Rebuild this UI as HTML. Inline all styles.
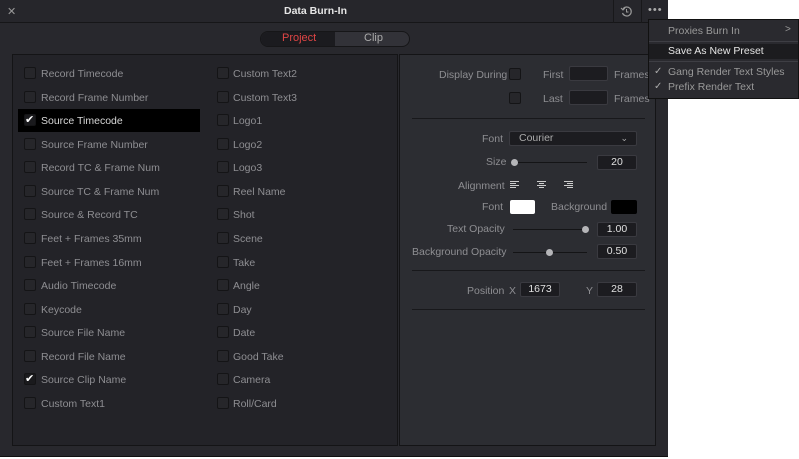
<!DOCTYPE html>
<html><head><meta charset="utf-8"><style>
*{margin:0;padding:0;box-sizing:border-box}
body{width:799px;height:459px;background:#fff;position:relative;overflow:hidden;font-family:"Liberation Sans",sans-serif;font-size:10px;color:#9a9a9c}
.a{position:absolute;white-space:nowrap}
#win{position:absolute;left:0;top:0;width:668px;height:457px;background:#28282d;border-bottom:1px solid #111}
#tb{position:absolute;left:0;top:0;width:668px;height:23px;background:#26262b;border-bottom:1px solid #161618}
.lp{position:absolute;left:12px;top:54px;width:386px;height:392px;background:#232328;border:1px solid #141416}
.rp{position:absolute;left:399px;top:54px;width:257px;height:392px;background:#2c2d32;border:1px solid #141416}
.cb{position:absolute;width:12px;height:12px;background:#26262a;border:1px solid #141416;border-radius:2px}
.lb{position:absolute;color:#8e8e92;font-size:10.5px;line-height:14px}
.in{position:absolute;height:15px;background:#1c1c20;border:1px solid #3a3a40;border-radius:2px;color:#e0e0e0;font-size:10.5px;text-align:center;line-height:13px}
.hr{position:absolute;left:412px;width:233px;height:1px;background:#18181b}
.sl{position:absolute;height:1px;background:#141416}
.dot{position:absolute;width:7px;height:7px;border-radius:50%;background:#b5b5b8}
</style></head><body>
<div id="win">
<div id="tb">
<div class="a" style="left:7px;top:5px;color:#999;font-size:11px">✕</div>
<div class="a" style="left:284px;top:5px;color:#e6e6e6;font-weight:bold;font-size:10.5px">Data Burn-In</div>
<div class="a" style="left:613px;top:0;width:1px;height:23px;background:#18181a"></div>
<div class="a" style="left:641px;top:0;width:1px;height:23px;background:#18181a"></div>
<svg class="a" style="left:620px;top:5px" width="13" height="13" viewBox="0 0 13 13"><path d="M3 4A4.5 4.5 0 1 1 2.5 8" fill="none" stroke="#999" stroke-width="1.2"/><path d="M1 3L3 5L5 3" fill="none" stroke="#999" stroke-width="1"/><path d="M6.5 4v3h2" fill="none" stroke="#999" stroke-width="1"/></svg>
<div class="a" style="left:648px;top:4px;color:#aaa;font-size:11px;letter-spacing:1px">•••</div>
</div>
<div class="a" style="left:260px;top:31px;width:150px;height:16px;border-radius:8px;background:#323238;border:1px solid #161618"></div>
<div class="a" style="left:261px;top:32px;width:74px;height:14px;border-radius:7px 0 0 7px;background:#1b1b1f"></div>
<div class="a" style="left:282px;top:32px;color:#e04545;font-size:11px">Project</div>
<div class="a" style="left:364px;top:32px;color:#aaa;font-size:11px">Clip</div>
<div class="lp"></div>
<div class="a" style="left:18px;top:109px;width:182px;height:23px;background:#000"></div>
<div class="rp"></div>
</div>
<div id="rows"></div>
<div class="lb" style="left:439px;top:68px">Display During</div>
<div class="cb" style="left:509px;top:68px"></div>
<div class="lb" style="left:543px;top:68px">First</div>
<div class="in" style="left:569px;top:66px;width:39px"></div>
<div class="lb" style="left:614px;top:68px">Frames</div>
<div class="cb" style="left:509px;top:92px"></div>
<div class="lb" style="left:543px;top:92px">Last</div>
<div class="in" style="left:569px;top:90px;width:39px"></div>
<div class="lb" style="left:614px;top:92px">Frames</div>
<div class="hr" style="top:118px"></div>
<div class="lb" style="left:482px;top:132px">Font</div>
<div class="in" style="left:509px;top:131px;width:128px;text-align:left;padding-left:9px;color:#aaa">Courier<span style="position:absolute;right:8px;top:0;font-size:9px">⌄</span></div>
<div class="lb" style="left:486px;top:155px">Size</div>
<div class="sl" style="left:514px;top:162px;width:73px"></div>
<div class="dot" style="left:511px;top:159px"></div>
<div class="in" style="left:597px;top:155px;width:40px">20</div>
<div class="lb" style="left:458px;top:179px">Alignment</div>
<svg class="a" style="left:509px;top:180px" width="66" height="10"><g stroke="#ccc" stroke-width="1"><path d="M1 1.5h9M1 3.5h6M1 5.5h9M1 7.5h6"/><path d="M28 1.5h9M30 3.5h5M28 5.5h9M30 7.5h5"/><path d="M55 1.5h9M58 3.5h6M55 5.5h9M58 7.5h6"/></g></svg>
<div class="lb" style="left:482px;top:200px">Font</div>
<div class="a" style="left:510px;top:200px;width:25px;height:14px;background:#fff;border-radius:2px"></div>
<div class="lb" style="left:551px;top:200px">Background</div>
<div class="a" style="left:611px;top:200px;width:26px;height:14px;background:#000;border-radius:2px"></div>
<div class="lb" style="left:447px;top:222px">Text Opacity</div>
<div class="sl" style="left:513px;top:229px;width:74px"></div>
<div class="dot" style="left:582px;top:226px"></div>
<div class="in" style="left:597px;top:222px;width:40px">1.00</div>
<div class="lb" style="left:412px;top:245px">Background Opacity</div>
<div class="sl" style="left:513px;top:252px;width:74px"></div>
<div class="dot" style="left:546px;top:249px"></div>
<div class="in" style="left:597px;top:244px;width:40px">0.50</div>
<div class="hr" style="top:270px"></div>
<div class="lb" style="left:467px;top:284px">Position</div>
<div class="lb" style="left:509px;top:284px">X</div>
<div class="in" style="left:520px;top:282px;width:40px">1673</div>
<div class="lb" style="left:586px;top:284px">Y</div>
<div class="in" style="left:597px;top:282px;width:40px">28</div>
<div class="hr" style="top:309px"></div>
<div class="a" style="left:648px;top:19px;width:151px;height:80px;background:#2a2a2f;border:1px solid #111"></div>
<div class="a" style="left:668px;top:25px;color:#999;font-size:10.5px">Proxies Burn In</div>
<div class="a" style="left:785px;top:24px;color:#999;font-size:10px">&gt;</div>
<div class="a" style="left:649px;top:41px;width:149px;height:1px;background:#3e3e44"></div>
<div class="a" style="left:649px;top:44px;width:149px;height:15px;background:#1c1c1f"></div>
<div class="a" style="left:668px;top:45px;color:#e6e6e6;font-size:10.5px">Save As New Preset</div>
<div class="a" style="left:649px;top:61px;width:149px;height:1px;background:#3e3e44"></div>
<div class="a" style="left:654px;top:66px;color:#aaa;font-size:10px">✓</div>
<div class="a" style="left:668px;top:66px;color:#999;font-size:10.5px">Gang Render Text Styles</div>
<div class="a" style="left:654px;top:81px;color:#aaa;font-size:10px">✓</div>
<div class="a" style="left:668px;top:81px;color:#999;font-size:10.5px">Prefix Render Text</div>
<script>
var c1=["Record Timecode","Record Frame Number","Source Timecode","Source Frame Number","Record TC & Frame Num","Source TC & Frame Num","Source & Record TC","Feet + Frames 35mm","Feet + Frames 16mm","Audio Timecode","Keycode","Source File Name","Record File Name","Source Clip Name","Custom Text1"];
var c2=["Custom Text2","Custom Text3","Logo1","Logo2","Logo3","Reel Name","Shot","Scene","Take","Angle","Day","Date","Good Take","Camera","Roll/Card"];
var h="";
for(var i=0;i<15;i++){var y=Math.round(74+i*23.57);
var ck=(i==2||i==13);
h+='<div class="cb" style="left:24px;top:'+(y-7)+'px;'+(ck?'background:#1a1a1d':'')+'"></div>';
if(ck)h+='<div class="a" style="left:25px;top:'+(y-8)+'px;color:#fff;font-size:11px">✔</div>';
h+='<div class="lb" style="left:41px;top:'+(y-7)+'px;'+(i==2?'color:#d8d8d8':'')+'">'+c1[i].replace("&","&amp;")+'</div>';
h+='<div class="cb" style="left:217px;top:'+(y-7)+'px"></div>';
h+='<div class="lb" style="left:233px;top:'+(y-7)+'px">'+c2[i]+'</div>';}
document.getElementById("rows").innerHTML=h;
</script>
</body></html>
